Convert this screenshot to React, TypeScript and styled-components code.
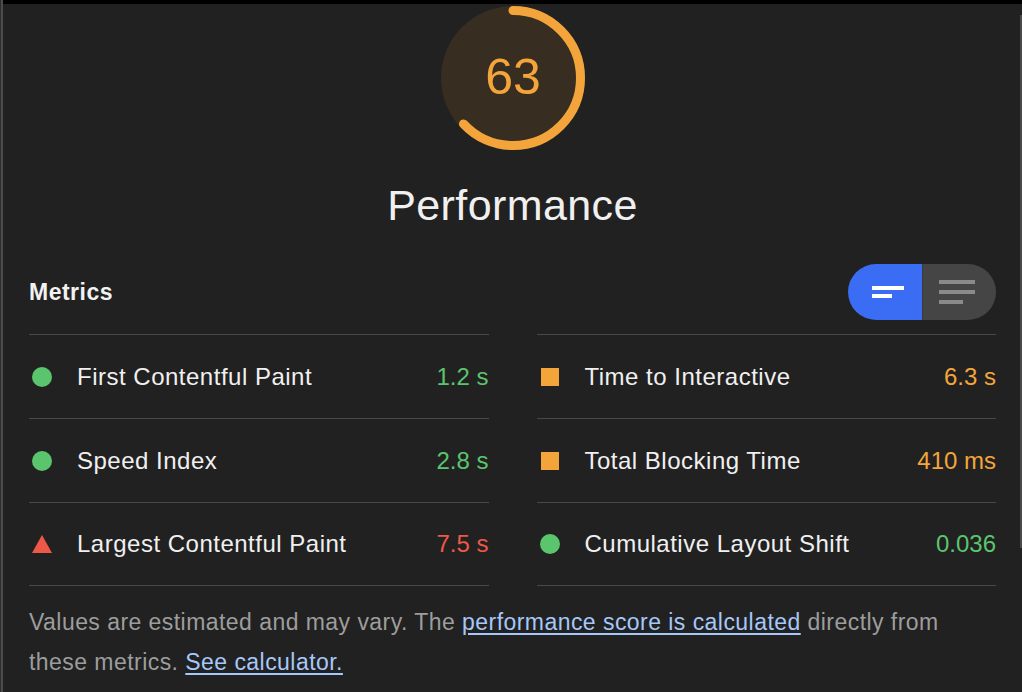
import React from 'react'
import styled, { createGlobalStyle } from 'styled-components'

type Rating = 'pass' | 'average' | 'fail'

interface IMetric {
	label: string
	value: string
	rating: Rating
}

const colors: Record<Rating, string> = {
	pass: '#5bc56e',
	average: '#f3a53b',
	fail: '#ee5848',
}

const metrics: IMetric[] = [
	{ label: 'First Contentful Paint', value: '1.2 s', rating: 'pass' },
	{ label: 'Time to Interactive', value: '6.3 s', rating: 'average' },
	{ label: 'Speed Index', value: '2.8 s', rating: 'pass' },
	{ label: 'Total Blocking Time', value: '410 ms', rating: 'average' },
	{ label: 'Largest Contentful Paint', value: '7.5 s', rating: 'fail' },
	{ label: 'Cumulative Layout Shift', value: '0.036', rating: 'pass' },
]

const GlobalStyle = createGlobalStyle`
	html, body {
		margin: 0;
		padding: 0;
		background: #212121;
	}
	body {
		font-family: 'Liberation Sans', Arial, sans-serif;
	}
`

const Gauge: React.FC<{ score: number }> = ({ score }) => {
	const r = 67.5
	const circ = 2 * Math.PI * r
	return (
		<GaugeWrap>
			<svg width="144" height="144" viewBox="0 0 144 144">
				<circle cx="72" cy="72" r="72" fill="#382d21" />
				<circle
					cx="72"
					cy="72"
					r={r}
					fill="none"
					stroke="#f3a53b"
					strokeWidth="9"
					strokeLinecap="round"
					strokeDasharray={`${(circ * score) / 100} ${circ}`}
					transform="rotate(-90 72 72)"
				/>
			</svg>
			<Score>{score}</Score>
		</GaugeWrap>
	)
}

const RatingIcon: React.FC<{ rating: Rating }> = ({ rating }) => {
	if (rating === 'fail') {
		return (
			<svg width="20" height="18" viewBox="0 0 20 18">
				<polygon points="10,0 20,18 0,18" fill={colors.fail} />
			</svg>
		)
	}
	if (rating === 'average') return <Square />
	return <Dot />
}

const App: React.FC = () => {
	return (
		<Frame>
			<GlobalStyle />
			<Panel>
				<TopBar />
				<Content>
					<Gauge score={63} />
					<Title>Performance</Title>
					<Header>
						<HeaderTitle>Metrics</HeaderTitle>
						<Toggle>
							<ToggleHalf active pad={24}>
								<Bars gap={4}>
									<Bar w={32} light />
									<Bar w={20} light />
								</Bars>
							</ToggleHalf>
							<ToggleHalf pad={16}>
								<Bars gap={6}>
									<Bar w={36} />
									<Bar w={36} />
									<Bar w={24} />
								</Bars>
							</ToggleHalf>
						</Toggle>
					</Header>
					<Grid>
						{metrics.map((m) => (
							<Row key={m.label}>
								<IconSlot>
									<RatingIcon rating={m.rating} />
								</IconSlot>
								<Label>{m.label}</Label>
								<Value rating={m.rating}>{m.value}</Value>
							</Row>
						))}
					</Grid>
					<Footer>
						Values are estimated and may vary. The{' '}
						<Link href="#">performance score is calculated</Link> directly from these
						metrics. <Link href="#">See calculator.</Link>
					</Footer>
				</Content>
				<Scrollbar />
			</Panel>
		</Frame>
	)
}

const Frame = styled.div`
	border-left: 1px solid #2e2e2e;
	min-height: 692px;
	box-sizing: border-box;
	background: #212121;
`
const Panel = styled.div`
	position: relative;
	border-left: 2px solid #4c4c4c;
	min-height: 692px;
	box-sizing: border-box;
`
const TopBar = styled.div`
	height: 4px;
	background: #000;
`
const Scrollbar = styled.div`
	position: absolute;
	right: 0;
	top: 15px;
	width: 2px;
	height: 533px;
	background: #4a4a4a;
`
const Content = styled.div`
	padding: 2px 26px 0 26px;
	display: flex;
	flex-direction: column;
`
const GaugeWrap = styled.div`
	position: relative;
	align-self: center;
	width: 144px;
	height: 144px;

	& svg {
		display: block;
	}
`
const Score = styled.div`
	position: absolute;
	inset: 0;
	display: flex;
	align-items: center;
	justify-content: center;
	font-size: 50px;
	color: #f3a53b;
	padding: 0 0 3px 1px;
`
const Title = styled.div`
	margin-top: 31px;
	text-align: center;
	font-size: 43px;
	letter-spacing: 0.4px;
	line-height: 48px;
	color: #f0f0f0;
`
const Header = styled.div`
	margin-top: 35px;
	display: flex;
	justify-content: space-between;
	align-items: center;
	height: 56px;
	margin-bottom: 14px;
`
const HeaderTitle = styled.div`
	font-size: 23px;
	letter-spacing: 0.5px;
	font-weight: bold;
	color: #f2f2f2;
`
const Toggle = styled.div`
	display: flex;
	width: 148px;
	height: 56px;
	border-radius: 28px;
	overflow: hidden;
`
const ToggleHalf = styled.div<{ active?: boolean; pad: number }>`
	width: 74px;
	box-sizing: border-box;
	display: flex;
	align-items: center;
	padding-left: ${(p) => p.pad}px;
	background: ${(p) => (p.active ? '#3a6cf4' : '#454545')};
	border-left: ${(p) => (p.active ? 'none' : '1px solid #3a3a3a')};
`
const Bars = styled.div<{ gap: number }>`
	display: flex;
	flex-direction: column;
	gap: ${(p) => p.gap}px;
`
const Bar = styled.div<{ w: number; light?: boolean }>`
	width: ${(p) => p.w}px;
	height: 4px;
	background: ${(p) => (p.light ? '#ffffff' : '#8a8a8a')};
`
const Grid = styled.div`
	display: grid;
	grid-template-columns: 1fr 1fr;
	column-gap: 48px;
`
const Row = styled.div`
	display: flex;
	align-items: center;
	height: 83px;
	border-top: 1px solid #484848;
	&:nth-last-child(-n + 2) {
		border-bottom: 1px solid #484848;
		height: 82px;
	}
`
const IconSlot = styled.div`
	width: 48px;
	flex-shrink: 0;
	display: flex;
	align-items: center;
	padding-left: 3px;
	box-sizing: border-box;
`
const Dot = styled.div`
	width: 20px;
	height: 20px;
	border-radius: 50%;
	background: ${colors.pass};
`
const Square = styled.div`
	width: 18px;
	height: 18px;
	margin-left: 1px;
	background: ${colors.average};
`
const Label = styled.div`
	flex: 1;
	font-size: 24px;
	letter-spacing: 0.5px;
	color: #f0f0f0;
`
const Value = styled.div<{ rating: Rating }>`
	font-size: 24px;
	color: ${(p) => colors[p.rating]};
`
const Footer = styled.p`
	margin: 16px 0 0 0;
	font-size: 23px;
	letter-spacing: 0.45px;
	line-height: 40px;
	color: #9d9d9d;
`
const Link = styled.a`
	color: #a6c8f8;
	text-decoration: underline;
	text-underline-offset: 3px;
`

export default App
